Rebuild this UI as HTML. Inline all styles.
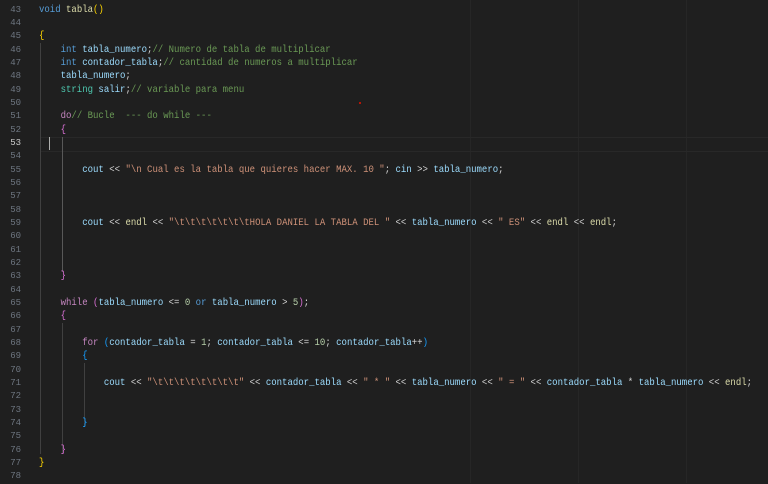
<!DOCTYPE html>
<html><head><style>
body{margin:0;width:768px;height:483px;background:#1f1f1f;overflow:hidden;position:relative;font-family:"Liberation Mono",monospace;font-size:9px;}
.l{position:absolute;left:0;height:13.34px;line-height:13.34px;white-space:pre;width:768px}
.n{position:absolute;left:0;width:21px;text-align:right;color:#6e7681}
.c{position:absolute;left:39px;color:#d4d4d4;display:inline-block;transform:scaleY(1.12);transform-origin:0 50%}
.k{color:#569cd6}.f{color:#dcdcaa}.v{color:#9cdcfe}.m{color:#6a9955}.s{color:#ce9178}.p{color:#c586c0}.y{color:#ffd700}.t{color:#4ec9b0}.u{color:#b5cea8}.b{color:#179fff}.pk{color:#da70d6}
.g{position:absolute;width:1px;background:#404040}
.r{position:absolute;top:0;height:483px;width:1px;background:#262626}
</style></head><body>
<div class="r" style="left:470px"></div><div class="r" style="left:578px"></div><div class="r" style="left:686px"></div>
<div style="position:absolute;left:40px;top:137px;width:728px;height:13px;border-top:1px solid #282828;border-bottom:1px solid #282828"></div>
<div class="g" style="left:40px;top:43px;height:411px"></div>
<div class="g" style="left:62px;top:137px;height:135px;background:#585858"></div>
<div class="g" style="left:62px;top:323px;height:131px"></div>
<div class="g" style="left:84px;top:363px;height:64px"></div>
<div style="position:absolute;left:49px;top:137px;width:1px;height:13px;background:#aeafad"></div>
<div style="position:absolute;left:359px;top:102px;width:2px;height:2px;background:#e51400;border-radius:1px"></div>

<div class="l" style="top:3.5px"><span class="n">43</span><span class="c"><span class="k">void</span> <span class="f">tabla</span><span class="y">()</span></span></div>
<div class="l" style="top:16.8px"><span class="n">44</span></div>
<div class="l" style="top:30.2px"><span class="n">45</span><span class="c"><span class="y">{</span></span></div>
<div class="l" style="top:43.5px"><span class="n">46</span><span class="c">    <span class="k">int</span> <span class="v">tabla_numero</span>;<span class="m">// Numero de tabla de multiplicar</span></span></div>
<div class="l" style="top:56.9px"><span class="n">47</span><span class="c">    <span class="k">int</span> <span class="v">contador_tabla</span>;<span class="m">// cantidad de numeros a multiplicar</span></span></div>
<div class="l" style="top:70.2px"><span class="n">48</span><span class="c">    <span class="v">tabla_numero</span>;</span></div>
<div class="l" style="top:83.5px"><span class="n">49</span><span class="c">    <span class="t">string</span> <span class="v">salir</span>;<span class="m">// variable para menu</span></span></div>
<div class="l" style="top:96.9px"><span class="n">50</span></div>
<div class="l" style="top:110.2px"><span class="n">51</span><span class="c">    <span class="p">do</span><span class="m">// Bucle  --- do while ---</span></span></div>
<div class="l" style="top:123.6px"><span class="n">52</span><span class="c">    <span class="pk">{</span></span></div>
<div class="l" style="top:136.9px"><span class="n" style="color:#ccc">53</span></div>
<div class="l" style="top:150.2px"><span class="n">54</span></div>
<div class="l" style="top:163.6px"><span class="n">55</span><span class="c">        <span class="v">cout</span> &lt;&lt; <span class="s">"\n Cual es la tabla que quieres hacer MAX. 10 "</span>; <span class="v">cin</span> &gt;&gt; <span class="v">tabla_numero</span>;</span></div>
<div class="l" style="top:176.9px"><span class="n">56</span></div>
<div class="l" style="top:190.3px"><span class="n">57</span></div>
<div class="l" style="top:203.6px"><span class="n">58</span></div>
<div class="l" style="top:216.9px"><span class="n">59</span><span class="c">        <span class="v">cout</span> &lt;&lt; <span class="f">endl</span> &lt;&lt; <span class="s">"\t\t\t\t\t\t\tHOLA DANIEL LA TABLA DEL "</span> &lt;&lt; <span class="v">tabla_numero</span> &lt;&lt; <span class="s">" ES"</span> &lt;&lt; <span class="f">endl</span> &lt;&lt; <span class="f">endl</span>;</span></div>
<div class="l" style="top:230.3px"><span class="n">60</span></div>
<div class="l" style="top:243.6px"><span class="n">61</span></div>
<div class="l" style="top:257px"><span class="n">62</span></div>
<div class="l" style="top:270.3px"><span class="n">63</span><span class="c">    <span class="pk">}</span></span></div>
<div class="l" style="top:283.6px"><span class="n">64</span></div>
<div class="l" style="top:297px"><span class="n">65</span><span class="c">    <span class="p">while</span> <span class="pk">(</span><span class="v">tabla_numero</span> &lt;= <span class="u">0</span> <span class="k">or</span> <span class="v">tabla_numero</span> &gt; <span class="u">5</span><span class="pk">)</span>;</span></div>
<div class="l" style="top:310.3px"><span class="n">66</span><span class="c">    <span class="pk">{</span></span></div>
<div class="l" style="top:323.7px"><span class="n">67</span></div>
<div class="l" style="top:337px"><span class="n">68</span><span class="c">        <span class="p">for</span> <span class="b">(</span><span class="v">contador_tabla</span> = <span class="u">1</span>; <span class="v">contador_tabla</span> &lt;= <span class="u">10</span>; <span class="v">contador_tabla</span>++<span class="b">)</span></span></div>
<div class="l" style="top:350.3px"><span class="n">69</span><span class="c">        <span class="b">{</span></span></div>
<div class="l" style="top:363.7px"><span class="n">70</span></div>
<div class="l" style="top:377px"><span class="n">71</span><span class="c">            <span class="v">cout</span> &lt;&lt; <span class="s">"\t\t\t\t\t\t\t\t"</span> &lt;&lt; <span class="v">contador_tabla</span> &lt;&lt; <span class="s">" * "</span> &lt;&lt; <span class="v">tabla_numero</span> &lt;&lt; <span class="s">" = "</span> &lt;&lt; <span class="v">contador_tabla</span> * <span class="v">tabla_numero</span> &lt;&lt; <span class="f">endl</span>;</span></div>
<div class="l" style="top:390.4px"><span class="n">72</span></div>
<div class="l" style="top:403.7px"><span class="n">73</span></div>
<div class="l" style="top:417px"><span class="n">74</span><span class="c">        <span class="b">}</span></span></div>
<div class="l" style="top:430.4px"><span class="n">75</span></div>
<div class="l" style="top:443.7px"><span class="n">76</span><span class="c">    <span class="pk">}</span></span></div>
<div class="l" style="top:457.1px"><span class="n">77</span><span class="c"><span class="y">}</span></span></div>
<div class="l" style="top:470.4px"><span class="n">78</span></div>
</body></html>
